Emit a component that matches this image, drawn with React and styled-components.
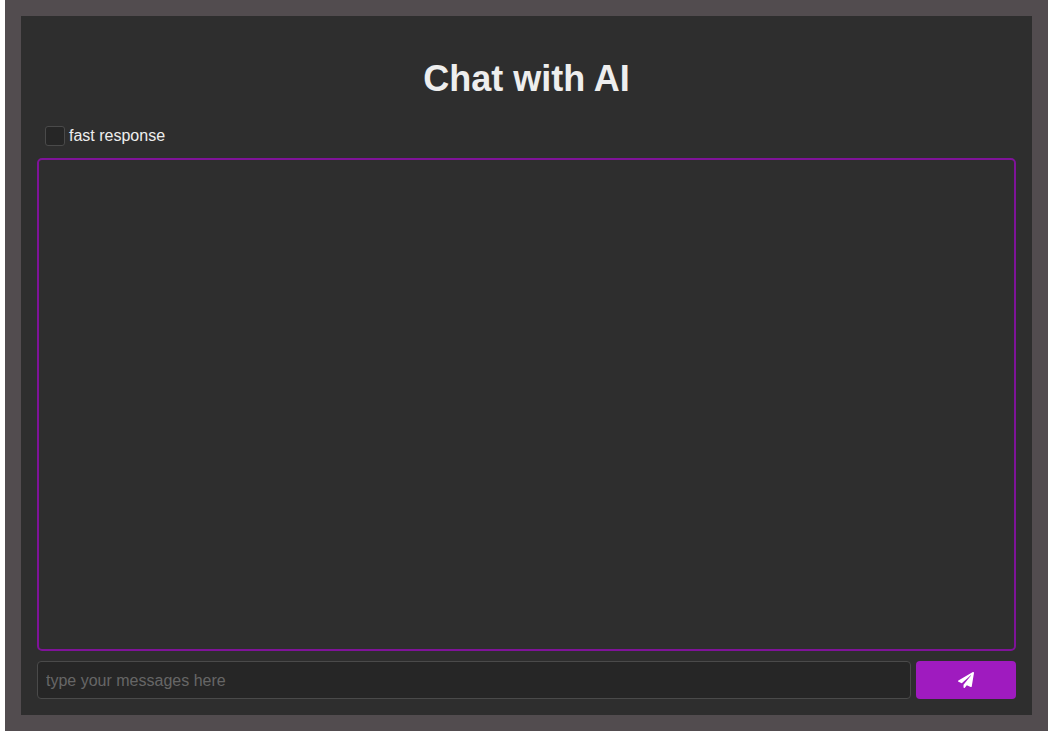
import React, { useState } from 'react'
import styled, { createGlobalStyle } from 'styled-components'
import { FaPaperPlane } from 'react-icons/fa'

const GlobalStyle = createGlobalStyle`
  * {
    box-sizing: border-box;
  }

  body {
    margin: 0;
    background-color: #fff;
    color: #eee;
    font-family: "Liberation Sans", Arial, sans-serif;
    font-size: 16px;
  }
`

const Page = styled.div`
  display: flex;
  min-height: 100vh;
  margin: 0 5px;
  padding: 16px;
  background-color: #524c4f;
`

const Container = styled.main`
  flex: 1;
  display: flex;
  flex-direction: column;
  padding: 16px;
  background-color: #2e2e2e;
`

const Title = styled.h1`
  margin: 24px 0;
  font-size: 36px;
  line-height: 46px;
  text-align: center;
`

const Option = styled.label`
  display: flex;
  align-items: center;
  align-self: flex-start;
  gap: 4px;
  margin: 0 8px 12px;
  line-height: 20px;
`

const Checkbox = styled.input`
  appearance: none;
  width: 20px;
  height: 20px;
  margin: 0;
  border: 1px solid #4a4a4a;
  border-radius: 3px;
  background-color: #262626;

  &:checked {
    background-color: #9f1bbf;
  }
`

const Messages = styled.section`
  flex: 1;
  border: 2px solid #7f1399;
  border-radius: 5px;
  overflow-y: auto;
`

const Form = styled.form`
  display: flex;
  gap: 5px;
  margin-top: 10px;
`

const Input = styled.input`
  flex: 1;
  min-width: 0;
  height: 38px;
  padding: 1px 8px 0;
  border: 1px solid #4a4a4a;
  border-radius: 4px;
  background-color: #262626;
  color: #eee;
  font: inherit;

  &::placeholder {
    color: #666;
  }
`

const SendButton = styled.button`
  display: flex;
  align-items: center;
  justify-content: center;
  width: 100px;
  height: 38px;
  border: none;
  border-radius: 4px;
  background-color: #9f1bbf;
  color: white;
  font-size: 16px;
  cursor: pointer;
`

const App = () => {
  const [fast, setFast] = useState(false)
  const [text, setText] = useState('')
  const [messages, setMessages] = useState([])

  const handleSubmit = (e) => {
    e.preventDefault()
    if (!text.trim()) return
    setMessages([...messages, text])
    setText('')
  }

  return (
    <Page>
        <GlobalStyle />
        <Container>
            <Title>Chat with AI</Title>
            <Option>
                <Checkbox type="checkbox" checked={fast} onChange={(e) => setFast(e.target.checked)} />
                fast response
            </Option>
            <Messages>
                {messages.map((message, i) => <p key={i}>{message}</p>)}
            </Messages>
            <Form onSubmit={handleSubmit}>
                <Input
                    aria-label="Message"
                    placeholder="type your messages here"
                    value={text}
                    onChange={(e) => setText(e.target.value)}
                />
                <SendButton aria-label="Send">
                    <FaPaperPlane />
                </SendButton>
            </Form>
        </Container>
    </Page>
  )
}

export default App
